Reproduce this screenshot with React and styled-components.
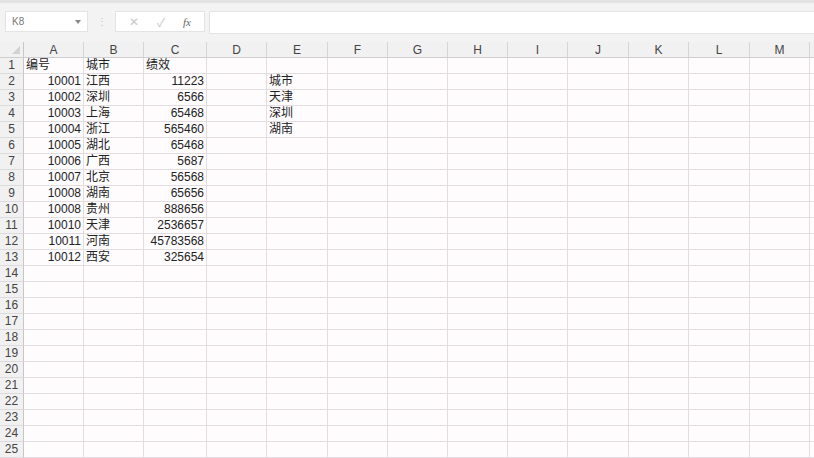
import React from 'react';
import styled, { createGlobalStyle } from 'styled-components';

const GlobalStyle = createGlobalStyle`
  body {
    margin: 0;
    background: #fffcfe;
    font-family: "Liberation Sans", "Noto Sans CJK SC", sans-serif;
    overflow: hidden;
  }
`;

const Page = styled.div`
  width: 814px;
  height: 458px;
  overflow: hidden;
  background: #fffcfe;
`;

const FormulaBar = styled.div`
  height: 42px;
  box-sizing: border-box;
  border-top: 3px solid #e2e2e2;
  background: #f3f3f3;
  display: flex;
  align-items: flex-start;
  padding: 8px 0 0 5px;
`;

const NameBox = styled.div`
  width: 83px;
  height: 21px;
  box-sizing: border-box;
  background: #fff;
  border: 1px solid #e4e4e4;
  display: flex;
  align-items: center;
  justify-content: space-between;
  padding: 0 6px 0 6px;
  font-size: 10px;
  color: #777;
`;

const Caret = styled.span`
  width: 0;
  height: 0;
  border-left: 3px solid transparent;
  border-right: 3px solid transparent;
  border-top: 4px solid #888;
`;

const Dots = styled.div`
  width: 27px;
  height: 21px;
  display: flex;
  align-items: center;
  justify-content: center;
  color: #c4c4c4;
  font-size: 10px;
`;

const ButtonBox = styled.div`
  width: 90px;
  height: 21px;
  box-sizing: border-box;
  background: #fff;
  border: 1px solid #e4e4e4;
  display: flex;
  align-items: center;
  justify-content: space-around;
  padding: 0 4px;
  color: #c8c8c8;
  font-size: 12px;
`;

const Fx = styled.span`
  font-family: "Liberation Serif", serif;
  font-style: italic;
  font-size: 11px;
  color: #666;
`;

const FormulaInput = styled.div`
  flex: 1;
  height: 21px;
  margin-left: 4px;
  background: #fff;
  border: 1px solid #e4e4e4;
  border-right: none;
`;

const Grid = styled.div`
  display: grid;
  grid-template-columns: 24px 60px 60px 63px 60px 61px 60px 60px 60px 60px 61px 60px 61px 60px 60px;
  grid-auto-rows: 16px;
`;

const Cell = styled.div`
  box-sizing: border-box;
  border-right: 1px solid #e3dde1;
  border-bottom: 1px solid #e3dde1;
  font-size: 12px;
  line-height: 15px;
  color: #222;
  padding: 0 2px;
  white-space: nowrap;
  overflow: hidden;
  text-align: ${p => (p.$num ? 'right' : 'left')};
`;

const ColHead = styled.div`
  box-sizing: border-box;
  background: #f2f1f2;
  border-right: 1px solid #d6d4d6;
  border-bottom: 1px solid #cfcdcf;
  font-size: 12px;
  line-height: 16px;
  color: #444;
  text-align: center;
`;

const Corner = styled(ColHead)`
  position: relative;
  border-right: 1px solid #c8c6c8;
  &::after {
    content: '';
    position: absolute;
    right: 3px;
    bottom: 3px;
    border-left: 8px solid transparent;
    border-bottom: 8px solid #d2d2d2;
  }
`;

const RowHead = styled.div`
  box-sizing: border-box;
  background: #f2f1f2;
  border-right: 1px solid #c8c6c8;
  border-bottom: 1px solid #dddbdd;
  font-size: 12px;
  line-height: 15px;
  color: #444;
  text-align: center;
`;

const columns = ['A', 'B', 'C', 'D', 'E', 'F', 'G', 'H', 'I', 'J', 'K', 'L', 'M', 'N'];

const records = [
  ['10001', '江西', '11223'],
  ['10002', '深圳', '6566'],
  ['10003', '上海', '65468'],
  ['10004', '浙江', '565460'],
  ['10005', '湖北', '65468'],
  ['10006', '广西', '5687'],
  ['10007', '北京', '56568'],
  ['10008', '湖南', '65656'],
  ['10008', '贵州', '888656'],
  ['10010', '天津', '2536657'],
  ['10011', '河南', '45783568'],
  ['10012', '西安', '325654'],
];

const lookup = ['城市', '天津', '深圳', '湖南'];

function cellValue(row, col) {
  if (row === 1) {
    return { A: '编号', B: '城市', C: '绩效' }[col] || '';
  }
  const rec = records[row - 2];
  if (rec) {
    if (col === 'A') return rec[0];
    if (col === 'B') return rec[1];
    if (col === 'C') return rec[2];
  }
  if (col === 'E' && lookup[row - 2]) return lookup[row - 2];
  return '';
}

export default function App() {
  const rows = Array.from({ length: 25 }, (_, i) => i + 1);
  return (
    <Page>
      <GlobalStyle />
      <FormulaBar>
        <NameBox>
          K8
          <Caret />
        </NameBox>
        <Dots>⋮</Dots>
        <ButtonBox>
          <span>✕</span>
          <span>✓</span>
          <Fx>fx</Fx>
        </ButtonBox>
        <FormulaInput />
      </FormulaBar>
      <Grid>
        <Corner />
        {columns.map(c => (
          <ColHead key={c}>{c}</ColHead>
        ))}
        {rows.map(r => (
          <React.Fragment key={r}>
            <RowHead>{r}</RowHead>
            {columns.map(c => {
              const v = cellValue(r, c);
              const num = r > 1 && /^\d+$/.test(v);
              return (
                <Cell key={c} $num={num}>
                  {v}
                </Cell>
              );
            })}
          </React.Fragment>
        ))}
      </Grid>
    </Page>
  );
}
